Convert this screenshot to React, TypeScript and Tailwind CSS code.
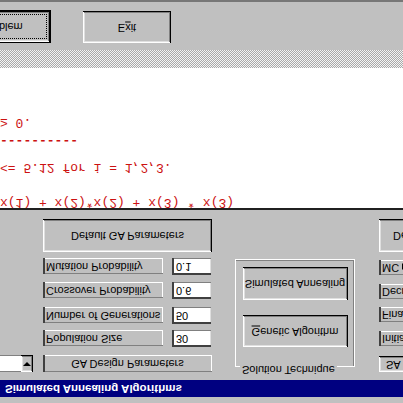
import type { ReactNode } from "react";

// the whole screen is shown upside down, so every text run is flipped in its own box
function Flip({ children, className = "" }: { children: ReactNode; className?: string }) {
  return <span className={"inline-block -scale-y-100 whitespace-nowrap " + className}>{children}</span>;
}

const raised =
  "bg-[#c0c0c0] shadow-[inset_-1px_1px_#000,inset_1px_-1px_#fff,inset_-2px_2px_#808080,inset_2px_-2px_#dfdfdf]";
const label =
  "bg-[#c0c0c0] shadow-[inset_2px_0_#404040,inset_0_-1px_#808080,inset_0_1px_#fff,inset_-1px_0_#fff]";
const field = "bg-white shadow-[inset_2px_0_#404040,inset_0_-2px_#404040,inset_0_1px_#808080,inset_-1px_0_#dfdfdf]";

function Button({ text, className = "" }: { text: ReactNode; className?: string }) {
  return (
    <div className={"flex shrink-0 items-center justify-center " + raised + " " + className}>
      <Flip>{text}</Flip>
    </div>
  );
}

function Label({ text, className = "" }: { text: ReactNode; className?: string }) {
  return (
    <div className={"flex shrink-0 items-center overflow-hidden pl-[3px] " + label + " " + className}>
      <Flip>{text}</Flip>
    </div>
  );
}

function ParamRow({ name, value, mt }: { name: string; value: string; mt: string }) {
  return (
    <div className={"flex h-[17px] " + mt}>
      <Label text={name} className="ml-[43px] h-[16px] w-[120px]" />
      <div className={"ml-[9px] flex h-[17px] w-[39px] items-center pl-[4px] " + field}>
        <Flip>{value}</Flip>
      </div>
    </div>
  );
}

const lines = [
  { text: "≥ 0.", mt: "mt-[47px]", cls: "" },
  { text: "----------", mt: "mt-[3px]", cls: "font-bold" },
  { text: "<= 5.12 for i = 1,2,3.", mt: "mt-[12px]", cls: "" },
  { text: "x(1) + x(2)*x(2) + x(3) * x(3)", mt: "mt-[20px]", cls: "" },
];

export default function App() {
  return (
    <div className="flex h-[403px] w-[403px] flex-col overflow-hidden bg-[#c0c0c0] font-['Liberation_Sans',Arial,sans-serif] text-[11px] text-black">
      <div className="h-[2px] shrink-0 bg-[#777]" />

      {/* command buttons */}
      <div className="flex h-[48px] shrink-0 items-start pt-[8px]">
        <div
          className={
            "ml-[-77px] flex h-[33px] w-[128px] shrink-0 items-center justify-center border border-black outline-1 -outline-offset-[5px] outline-black outline-dotted " +
            raised
          }
        >
          <Flip>Solve Problem</Flip>
        </div>
        <Button
          className="ml-[32px] mt-[1px] h-[32px] w-[88px]"
          text={
            <>
              E<span className="underline">x</span>it
            </>
          }
        />
      </div>

      <div className="h-[18px] shrink-0 bg-[image:repeating-conic-gradient(#aaaaaa_0_25%,#f4f4f4_0_50%)] bg-[length:2px_2px]" />

      {/* problem text */}
      <div className="flex h-[140px] shrink-0 flex-col overflow-hidden bg-white font-['Liberation_Mono',monospace] text-[13px] leading-[15px] text-[#cc1111]">
        {lines.map((l) => (
          <div key={l.text} className={"h-[15px] shrink-0 " + l.mt}>
            <Flip className={"leading-[15px] " + l.cls}>{l.text}</Flip>
          </div>
        ))}
      </div>

      {/* parameter panel */}
      <div className="flex h-[172px] shrink-0 border-t-2 border-[#202020]">
        <div className="flex w-[212px] shrink-0 flex-col">
          <Button text="Default GA Parameters" className="ml-[43px] mt-[9px] h-[33px] w-[169px]" />
          <ParamRow name="Mutation Probability" value="0.1" mt="mt-[6px]" />
          <ParamRow name="Crossover Probability" value="0.6" mt="mt-[7px]" />
          <ParamRow name="Number of Generations" value="50" mt="mt-[8px]" />
          <ParamRow name="Population Size" value="30" mt="mt-[6px]" />
          <div className="mt-[8px] flex h-[17px]">
            <div className="w-[21px] shrink-0 border-y border-[#808080] bg-white" />
            <div className={"flex w-[12px] shrink-0 items-center justify-center " + raised}>
              <div className="h-0 w-0 border-x-[4px] border-b-[4px] border-x-transparent border-b-black" />
            </div>
            <div className={"ml-[10px] flex h-[17px] w-[169px] items-center justify-center " + label}>
              <Flip>GA Design Parameters</Flip>
            </div>
          </div>
        </div>

        <div className="relative ml-[23px] mt-[49px] flex h-[108px] w-[120px] shrink-0 flex-col items-center border border-white shadow-[inset_-1px_1px_#808080]">
          <Button text="Simulated Annealing" className="mt-[7px] h-[33px] w-[105px]" />
          <Button
            className="mt-[15px] h-[32px] w-[105px]"
            text={
              <>
                <span className="underline">G</span>enetic Algorithm
              </>
            }
          />
          <div className="absolute bottom-[-11px] left-[4px] bg-[#c0c0c0] px-[2px] leading-[14px]">
            <Flip>Solution Technique</Flip>
          </div>
        </div>

        <div className="ml-[24px] flex w-[150px] shrink-0 flex-col">
          <Button text="Default SA Parameters" className="mt-[9px] h-[33px] w-[150px] !justify-start pl-[14px]" />
          <Label
            className="mt-[8px] h-[15px] w-[150px]"
            text={
              <>
                MC <span className="inline-block h-[6px] w-[3px] bg-black align-middle" />
              </>
            }
          />
          <Label text="Decrement Factor" className="mt-[9px] h-[15px] w-[150px]" />
          <Label text="Final Temperature" className="mt-[8px] h-[15px] w-[150px]" />
          <Label text="Initial Temperature" className="mt-[9px] h-[15px] w-[150px]" />
          <Button text="SA Design Parameters" className="mt-[10px] h-[16px] w-[150px] !justify-start pl-[7px]" />
        </div>
      </div>

      <div className="flex h-[17px] shrink-0 items-center bg-[#000080] pl-[5px] text-[11.5px] font-bold text-white">
        <Flip>Simulated Annealing Algorithms</Flip>
      </div>
    </div>
  );
}
